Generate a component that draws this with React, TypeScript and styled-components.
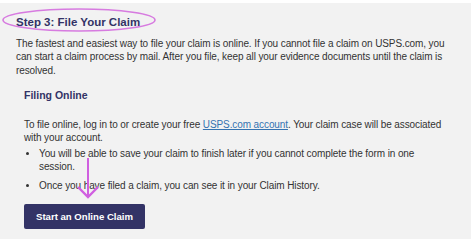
import styled, { createGlobalStyle } from 'styled-components';

const GlobalStyle = createGlobalStyle`
	html, body {
		margin: 0;
		padding: 0;
		background: #ffffff;
	}
	body {
		font-family: 'Liberation Sans', Arial, sans-serif;
	}
`;

const Panel = styled.section`
	position: relative;
	width: 471px;
	height: 236px;
	margin-top: 3px;
	background: #f2f2f2;
	box-sizing: border-box;
	padding: 10px 16px 0 16px;
	color: #333333;
`;

const StepTitle = styled.h2`
	margin: 0;
	font-size: 11.5px;
	line-height: 18px;
	font-weight: 700;
	color: #333366;
`;

const Text = styled.p<{ $gap?: number }>`
	margin: ${(p) => (p.$gap === undefined ? 5.5 : p.$gap)}px 0 0 0;
	font-size: 10px;
	line-height: 13.5px;
	letter-spacing: -0.1px;
`;

const SubSection = styled.div`
	padding: 0 12px 0 8px;
	margin-top: 9px;
`;

const SubTitle = styled.h3`
	margin: 0;
	font-size: 10.5px;
	line-height: 18px;
	font-weight: 700;
	color: #333366;
`;

const Link = styled.a`
	color: #3573b1;
	text-decoration: underline;
`;

const BulletList = styled.ul`
	margin: 2px 0 0 0;
	padding-left: 15px;
	font-size: 10px;
	line-height: 13.5px;
	letter-spacing: -0.1px;

	li {
		margin-bottom: 5.5px;
	}
	li:last-child {
		margin-bottom: 0;
	}
`;

const ClaimButton = styled.button`
	display: block;
	margin-top: 11.5px;
	height: 25px;
	width: 121px;
	padding: 0;
	border: none;
	border-radius: 2px;
	background: #333366;
	color: #ffffff;
	font-family: inherit;
	font-size: 9.6px;
	font-weight: 700;
	white-space: nowrap;
	cursor: pointer;
`;

const Annotation = styled.svg`
	position: absolute;
	left: 0;
	top: -3px;
	pointer-events: none;
`;

export default function App() {
	return (
		<>
			<GlobalStyle />
			<Panel>
				<StepTitle>Step 3: File Your Claim</StepTitle>
				<Text>
					The fastest and easiest way to file your claim is online. If you cannot file a claim on USPS.com, you
					can start a claim process by mail. After you file, keep all your evidence documents until the claim is
					resolved.
				</Text>
				<SubSection>
					<SubTitle>Filing Online</SubTitle>
					<Text $gap={13.5}>
						To file online, log in to or create your free <Link href="#">USPS.com account</Link>. Your claim case will be associated
						with your account.
					</Text>
					<BulletList>
						<li>You will be able to save your claim to finish later if you cannot complete the form in one session.</li>
						<li>Once you have filed a claim, you can see it in your Claim History.</li>
					</BulletList>
					<ClaimButton>Start an Online Claim</ClaimButton>
				</SubSection>
				{/* pink markup drawn over the screenshot */}
				<Annotation width="474" height="242" viewBox="0 0 474 242">
					<ellipse cx="79" cy="20" rx="76" ry="11" fill="none" stroke="#d77be0" strokeWidth="1.6" />
					<line x1="88" y1="158" x2="88" y2="196" stroke="#d05fe0" strokeWidth="2" />
					<polyline points="78,187 88,197 98,187" fill="none" stroke="#d05fe0" strokeWidth="2.4" />
				</Annotation>
			</Panel>
		</>
	);
}
